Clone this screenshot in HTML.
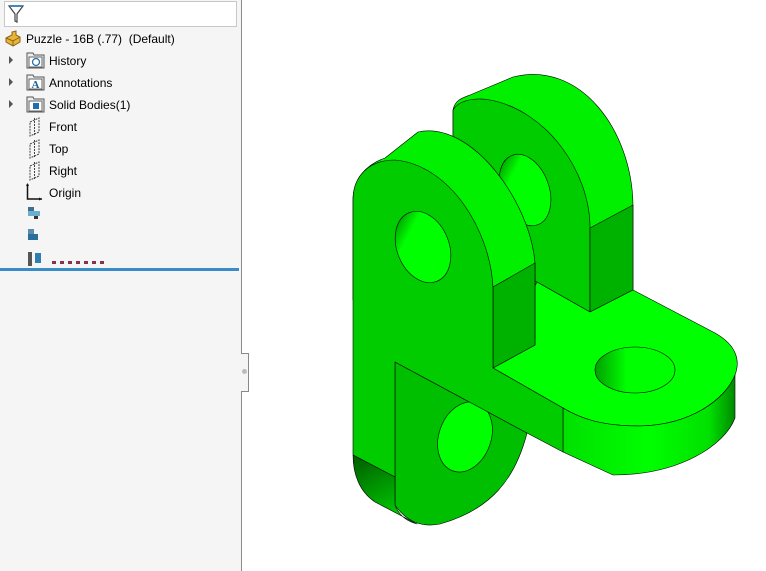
<!DOCTYPE html>
<html><head><meta charset="utf-8"><style>
html,body{margin:0;padding:0;width:766px;height:571px;overflow:hidden;background:#fff;font-family:"Liberation Sans",sans-serif}
#panel{position:absolute;left:0;top:0;width:241px;height:571px;background:#f5f5f5;border-right:1px solid #8a8a8a}
#handle{position:absolute;left:241px;top:353px;width:7px;height:37px;background:#f5f5f5;border:1px solid #8a8a8a;border-left:none}
#handle i{position:absolute;left:1px;top:15px;width:5px;height:5px;border-radius:50%;background:#bbb;border:0}
#filter{position:absolute;left:4px;top:1px;width:231px;height:24px;background:#fff;border:1px solid #c8c8c8}
.row{position:absolute;font-size:12px;color:#000;white-space:nowrap;line-height:14px}
.tri{position:absolute;left:9px;width:0;height:0;border-left:4px solid #555;border-top:4px solid transparent;border-bottom:4px solid transparent}
#blue{position:absolute;left:0;top:268px;width:239px;height:3px;background:#3a8cc8}
</style></head><body>
<div id="panel">
<div id="filter"><svg width="20" height="22" style="position:absolute;left:2px;top:1px"><path d="M2 3 H16 L10 11 V19 L8 18 V11 Z" fill="#fff" stroke="#444" stroke-width="1.2"/><path d="M3 3H15" stroke="#3a8cc8" stroke-width="2"/></svg></div>
<svg width="20" height="18" style="position:absolute;left:4px;top:30px"><path d="M2 8 L8 5 L8 2 L12 1 L12 5 L16 7 L16 12 L9 16 L2 12Z" fill="#e8b53a" stroke="#8a6410"/><path d="M2 8 L9 11 L16 7 M9 11 V16" stroke="#8a6410" fill="none"/></svg>
<div class="row" style="left:26px;top:32px">Puzzle - 16B (.77)&nbsp; (Default)</div>
<div class="tri" style="top:56px"></div><div class="tri" style="top:78px"></div><div class="tri" style="top:100px"></div>
<svg width="20" height="18" style="position:absolute;left:26px;top:51px"><path d="M1 2H7L8 4H18V17H1Z" fill="#eee" stroke="#555"/><rect x="3" y="6" width="13" height="10" fill="#fff" stroke="#666"/><circle cx="10" cy="11" r="3.5" fill="none" stroke="#2a70a8" stroke-width="1.3"/></svg>
<div class="row" style="left:49px;top:54px">History</div>
<svg width="20" height="18" style="position:absolute;left:26px;top:73px"><path d="M1 2H7L8 4H18V17H1Z" fill="#eee" stroke="#555"/><rect x="3" y="6" width="13" height="10" fill="#fff" stroke="#666"/><text x="5.5" y="15" font-size="11" font-weight="bold" fill="#1d5f9a" font-family="Liberation Serif">A</text></svg>
<div class="row" style="left:49px;top:76px">Annotations</div>
<svg width="20" height="18" style="position:absolute;left:26px;top:95px"><path d="M1 2H7L8 4H18V17H1Z" fill="#eee" stroke="#555"/><rect x="3" y="6" width="13" height="10" fill="#fff" stroke="#666"/><rect x="7" y="8" width="6" height="6" fill="#1d6fb0"/></svg>
<div class="row" style="left:49px;top:98px">Solid Bodies(1)</div>
<svg width="16" height="20" style="position:absolute;left:28px;top:117px"><path d="M2 5 L11 1 V15 L2 19Z" fill="none" stroke="#444" stroke-dasharray="2 1"/><path d="M6.5 1V19" stroke="#444" stroke-dasharray="2 1"/></svg>
<div class="row" style="left:49px;top:120px">Front</div>
<svg width="16" height="20" style="position:absolute;left:28px;top:139px"><path d="M2 5 L11 1 V15 L2 19Z" fill="none" stroke="#444" stroke-dasharray="2 1"/><path d="M6.5 1V19" stroke="#444" stroke-dasharray="2 1"/></svg>
<div class="row" style="left:49px;top:142px">Top</div>
<svg width="16" height="20" style="position:absolute;left:28px;top:161px"><path d="M2 5 L11 1 V15 L2 19Z" fill="none" stroke="#444" stroke-dasharray="2 1"/><path d="M6.5 1V19" stroke="#444" stroke-dasharray="2 1"/></svg>
<div class="row" style="left:49px;top:164px">Right</div>
<svg width="20" height="20" style="position:absolute;left:26px;top:182px"><path d="M1.5 2V17H16" fill="none" stroke="#111" stroke-width="1.5"/><path d="M0 4L1.5 1L3 4Z M13 15.5L16 17L13 18.5Z" fill="#111"/></svg>
<div class="row" style="left:49px;top:186px">Origin</div>
<div style="position:absolute;left:28px;top:207px;width:6px;height:4px;background:#3d6f93"></div>
<div style="position:absolute;left:28px;top:211px;width:12px;height:5px;background:#6aaed0"></div>
<div style="position:absolute;left:34px;top:216px;width:4px;height:3px;background:#333"></div>
<div style="position:absolute;left:28px;top:229px;width:6px;height:5px;background:#5a8cb0"></div>
<div style="position:absolute;left:28px;top:234px;width:10px;height:6px;background:#2a6f9a"></div>
<div style="position:absolute;left:28px;top:252px;width:4px;height:14px;background:#555"></div>
<div style="position:absolute;left:35px;top:253px;width:6px;height:10px;background:#2d7faf"></div>
<div style="position:absolute;left:52px;top:261px;width:52px;height:3px;background:repeating-linear-gradient(90deg,#8a3050 0 4px,transparent 4px 8px)"></div>
<div id="blue"></div>
</div>
<div id="handle"><i></i></div>

<svg width="766" height="571" style="position:absolute;left:0;top:0" stroke="#000" stroke-width="0.6" stroke-linejoin="round">
<defs>
<linearGradient id="cyl" x1="0" x2="1"><stop offset="0" stop-color="#00e000"/><stop offset="0.5" stop-color="#00ff00"/><stop offset="0.85" stop-color="#00e000"/><stop offset="1" stop-color="#008a00"/></linearGradient>
<linearGradient id="bl" x1="0" y1="0" x2="0.5" y2="1"><stop offset="0" stop-color="#005a00"/><stop offset="1" stop-color="#00cc00"/></linearGradient>
<linearGradient id="hole" x1="0" y1="0" x2="0.6" y2="1"><stop offset="0" stop-color="#006800"/><stop offset="0.35" stop-color="#00ff00"/><stop offset="1" stop-color="#00ff00"/></linearGradient>
<linearGradient id="hole2" x1="0" x2="1"><stop offset="0" stop-color="#00a000"/><stop offset="0.4" stop-color="#00ff00"/><stop offset="1" stop-color="#00ff00"/></linearGradient>
</defs>
<path d="M453 110 C455 100 462 98 470 95 L513 77 C580 60 632 130 633 205 L633 290 L590 312 L453 240Z" fill="#00f000"/>
<path d="M453 110 C460 98 480 98 490 100 C545 110 590 170 590 228 L590 312 L537 282 L453 240Z" fill="#00cc00"/>
<path d="M590 228 L633 205 L633 290 L590 312Z" fill="#00b200"/>
<ellipse cx="525" cy="190" rx="24" ry="37" transform="rotate(-20 525 190)" fill="url(#hole)"/>
<path d="M493 368 L537 282 L590 312 L633 290 L715 333 C738 346 740 362 735 375 C725 400 690 425 640 426 C600 426 580 418 563 408 Z" fill="#00ff00"/>
<path d="M563 408 C580 418 600 426 640 426 C690 425 725 400 735 375 L735 418 C725 445 680 475 613 475 L563 452Z" fill="url(#cyl)"/>
<ellipse cx="635" cy="370" rx="40" ry="23" fill="url(#hole2)"/>
<path d="M353 200 C353 180 365 165 385 158 L418 132 C470 120 530 200 535 263 L535 345 L493 368 L353 300Z" fill="#00f000"/>
<path d="M493 287 L535 263 L535 345 L493 368Z" fill="#00b200"/>
<path d="M395 362 L527 433 C515 480 490 510 440 524 C420 528 405 520 395 505Z" fill="#00bf00"/>
<ellipse cx="465" cy="437" rx="26" ry="36" transform="rotate(20 465 437)" fill="#00ff00"/>
<path d="M353 200 C353 175 370 160 395 160 C450 165 490 230 493 287 L493 368 L563 408 L563 452 L527 433 L395 362 L395 477 L353 455Z" fill="#00cc00"/>
<path d="M353 455 L395 477 L395 505 C400 518 410 522 417 524 L375 502 C360 492 353 475 353 455Z" fill="url(#bl)"/>
<ellipse cx="423" cy="247" rx="26" ry="37" transform="rotate(-22 423 247)" fill="url(#hole)"/>
</svg>
</body></html>
